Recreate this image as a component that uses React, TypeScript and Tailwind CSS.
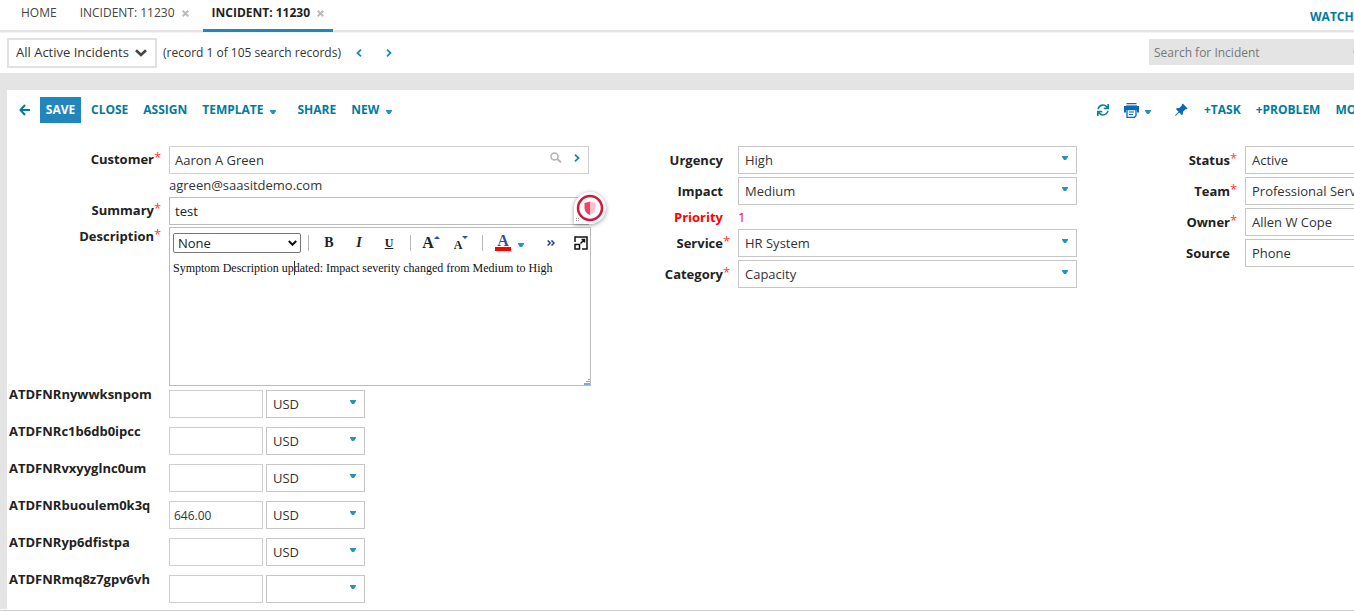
import { useState } from "react";
import type { ReactNode } from "react";
import { FaSync } from "react-icons/fa";
import { BsPinAngleFill } from "react-icons/bs";

const tabs = [
  { label: "HOME", closable: false },
  { label: "INCIDENT: 11230", closable: true },
  { label: "INCIDENT: 11230", closable: true },
];

const amounts = [
  { name: "ATDFNRnywwksnpom", value: "", currency: "USD" },
  { name: "ATDFNRc1b6db0ipcc", value: "", currency: "USD" },
  { name: "ATDFNRvxyyglnc0um", value: "", currency: "USD" },
  { name: "ATDFNRbuoulem0k3q", value: "646.00", currency: "USD" },
  { name: "ATDFNRyp6dfistpa", value: "", currency: "USD" },
  { name: "ATDFNRmq8z7gpv6vh", value: "", currency: "" },
];

function Caret({ className = "" }: { className?: string }) {
  return (
    <svg viewBox="0 0 6 4" className={`w-1.5 h-1 shrink-0 fill-[#2a93b5] ${className}`} aria-hidden="true">
      <path d="M0 0h6v1L4 4H2L0 1z" />
    </svg>
  );
}

function Chevron({ left = false }: { left?: boolean }) {
  return (
    <svg viewBox="0 0 6 8" className="w-[6px] h-2 fill-none stroke-[#2189a8]" strokeWidth="1.800" aria-hidden="true">
      <path d={left ? "M5 .7L1.500 4 5 7.300" : "M1 .7L4.500 4 1 7.300"} />
    </svg>
  );
}

function Magnifier() {
  return (
    <svg viewBox="0 0 12 11" className="w-3 h-[11px] fill-none stroke-[#b5b5b5]" aria-hidden="true">
      <circle cx="4.500" cy="4.500" r="3.500" strokeWidth="1.600" />
      <path d="M7.200 7l3.800 3.300" strokeWidth="2" />
    </svg>
  );
}

function Label({ id, text, required, tone = "text-[#222]" }: { id: string; text: string; required?: boolean; tone?: string }) {
  return (
    <label htmlFor={id} className={`flex justify-end font-bold leading-[18px] ${tone}`}>
      {text}
      <span className="w-[15px] shrink-0 font-normal text-[#ff3b30] leading-3.5">{required ? "*" : ""}</span>
    </label>
  );
}

function Select({ id, value, className = "" }: { id: string; value: string; className?: string }) {
  return (
    <div className={`relative ${className}`}>
      <select
        id={id}
        aria-label={id}
        defaultValue={value}
        className="block w-full h-7 appearance-none border border-[#c6c6c6] bg-white pt-0.5 pl-1.5 pr-6 text-[#333] outline-none"
      >
        <option>{value}</option>
      </select>
      <Caret className="absolute right-[9px] top-2.5 pointer-events-none" />
    </div>
  );
}

function SelectRow({ id, value, required }: { id: string; value: string; required?: boolean }) {
  return (
    <>
      <Label id={id} text={id} required={required} />
      <Select id={id} value={value} />
    </>
  );
}

function Action({ children }: { children: ReactNode }) {
  return (
    <button className="flex items-center gap-[7px] whitespace-nowrap font-bold text-[#007b9e] hover:underline">
      {children}
    </button>
  );
}

function Tool({ label, children }: { label: string; children: ReactNode }) {
  return (
    <button type="button" aria-label={label} className="flex h-6 w-[30px] shrink-0 items-center justify-center font-['Liberation_Serif',serif] font-bold text-[#222]">
      {children}
    </button>
  );
}

function Divider() {
  return <span className="ml-1.5 mr-[5px] h-4 w-px shrink-0 bg-[#b8b8b8]" />;
}

function Tabs() {
  const [active, setActive] = useState(2);
  return (
    <header className="flex h-8 items-stretch border-b-2 border-[#e4e4e4]">
      <nav className="flex pl-3">
        {tabs.map((t, i) => (
          <div
            key={i}
            className={`-mb-0.5 flex items-start gap-[7px] px-[9px] pt-1 border-b-[3px] mr-[5px] ${
              active === i ? "border-[#2186bd]" : "border-transparent"
            }`}
          >
            <button
              onClick={() => setActive(i)}
              className={`text-xs leading-[18px] ${active === i ? "font-bold text-[#222]" : "text-[#444]"}`}
            >
              {t.label}
            </button>
            {t.closable && (
              <button aria-label="Close tab" className="mt-1.5">
                <svg viewBox="0 0 7 7" className="size-[7px] fill-none stroke-[#bbb]" strokeWidth="2">
                  <path d="M.7.7l5.600 5.600M6.300.7L.7 6.300" />
                </svg>
              </button>
            )}
          </div>
        ))}
      </nav>
      <div className="ml-auto w-11 shrink-0 overflow-hidden pt-2">
        <a href="#watch" className="block text-xs leading-[18px] font-bold text-[#007b9e]">WATCH</a>
      </div>
    </header>
  );
}

function RecordBar() {
  return (
    <div className="flex h-[41px] items-center border-t border-[#f3f3f3] pl-[7px] text-[#333]">
      <div className="relative">
        <select
          aria-label="Saved search"
          className="block h-[30px] w-[150px] appearance-none border-2 border-[#e1e1e1] bg-white pl-[7px] outline-none"
        >
          <option>All Active Incidents</option>
        </select>
        <svg viewBox="0 0 12 8" className="absolute right-[10px] top-[11px] w-3 h-2 fill-none stroke-[#444] pointer-events-none" strokeWidth="2.600">
          <path d="M1 1.200l5 4.800 5-4.800" />
        </svg>
      </div>
      <span className="ml-1.5 text-xs">(record 1 of 105 search records)</span>
      <button aria-label="Previous record" className="ml-[15px]"><Chevron left /></button>
      <button aria-label="Next record" className="ml-6"><Chevron /></button>
      <div className="ml-auto mb-0.5 flex h-[26px] w-[205px] shrink-0 items-center overflow-hidden bg-[#e4e4e4]">
        <input
          aria-label="Search for Incident"
          placeholder="Search for Incident"
          className="h-full w-[204px] shrink-0 bg-transparent pl-[5px] text-xs placeholder:text-[#777] outline-none"
        />
        <span className="shrink-0"><Magnifier /></span>
      </div>
    </div>
  );
}

function Toolbar() {
  return (
    <div className="flex h-[38px] items-center pt-0.5 pl-3 text-xs">
      <button aria-label="Back">
        <svg viewBox="0 0 11 12" className="w-[11px] h-3 fill-none stroke-[#007b9e]" strokeWidth="2">
          <path d="M6 1L1.500 6 6 11M1.500 6H11" />
        </svg>
      </button>
      <button className="ml-2.5 h-[26px] w-[41px] bg-[#2186bd] font-bold text-white">SAVE</button>
      <div className="ml-2.5 flex gap-[15px]">
        <Action>CLOSE</Action>
        <Action>ASSIGN</Action>
        <div className="mr-1.5"><Action>TEMPLATE <Caret className="mt-1" /></Action></div>
        <Action>SHARE</Action>
        <Action>NEW <Caret className="mt-1" /></Action>
      </div>
      <div className="ml-auto flex w-[257px] shrink-0 items-center gap-[15px]">
        <button aria-label="Refresh" className="shrink-0 text-[#12809a]"><FaSync className="size-3" /></button>
        <button aria-label="Print" className="flex shrink-0 items-center gap-1.5 mr-2">
          <svg viewBox="0 0 15 15" className="size-[15px]">
            <path fill="#0a68b4" d="M2.500 0h10v1.200h-10zM0 3h15v6.500h-2V7H2v2.500H0z" />
            <path fill="#0a68b4" d="M2 2h11v1.500H2z" opacity=".6" />
            <path fill="#fff" stroke="#0a68b4" strokeWidth="1.300" d="M3 6.500h9v6.300l-1.500 1.500H3z" />
            <path fill="none" stroke="#0a68b4" d="M5 9h5M5 11.500h4" />
          </svg>
          <Caret className="mt-1" />
        </button>
        <button aria-label="Pin" className="mr-px shrink-0 text-[#0a68b4]"><BsPinAngleFill className="size-[14px]" /></button>
        <Action>+TASK</Action>
        <Action>+PROBLEM</Action>
        <Action>MORE</Action>
      </div>
    </div>
  );
}

function Editor() {
  return (
    <div className="relative flex h-[159px] flex-col border border-[#bcbcbc] pt-0.5">
      <div className="flex h-[26px] items-center pl-[3px]">
        <div className="relative">
          <select aria-label="Font" className="block h-5 w-32 appearance-none rounded-xs border border-[#767676] bg-white pl-1 text-[#222] outline-none">
            <option>None</option>
          </select>
          <svg viewBox="0 0 9 6" className="absolute right-1 top-[7px] w-[9px] h-1.5 fill-none stroke-[#111] pointer-events-none" strokeWidth="2">
            <path d="M.8 1l3.700 3.700L8.200 1" />
          </svg>
        </div>
        <span className="ml-[7px] mr-[5px] h-4 w-px shrink-0 bg-[#b8b8b8]" />
        <Tool label="Bold"><span className="text-sm font-bold">B</span></Tool>
        <Tool label="Italic"><span className="text-sm italic">I</span></Tool>
        <Tool label="Underline"><span className="text-xs underline">U</span></Tool>
        <Divider />
        <Tool label="Grow text">
          <span className="text-base">A</span>
          <svg viewBox="0 0 6 3" className="mb-3 w-1.5 h-[3px] fill-[#2f4f9f]"><path d="M3 0l3 3H0z" /></svg>
        </Tool>
        <Tool label="Shrink text">
          <span className="pt-1 text-xs">A</span>
          <svg viewBox="0 0 6 3" className="mb-3 w-1.5 h-[3px] fill-[#2f4f9f]"><path d="M0 0h6L3 3z" /></svg>
        </Tool>
        <Divider />
        <Tool label="Text color">
          <span className="h-[15px] border-b-4 border-[#f00] px-0.5 text-base leading-[10px] text-[#2f4f9f]">A</span>
        </Tool>
        <Caret className="mt-1" />
        <span className="ml-auto flex">
          <Tool label="More tools">
            <svg viewBox="0 0 8 6" className="w-2 h-1.5 fill-none stroke-[#2647a0]" strokeWidth="1.500">
              <path d="M.7.4L3.200 3 .7 5.600M4.500.4L7 3 4.500 5.600" />
            </svg>
          </Tool>
          <button type="button" aria-label="Expand editor" className="ml-2 mr-0.5">
            <svg viewBox="0 0 14 14" className="size-[14px] fill-none stroke-[#111]" strokeWidth="1.500">
              <path d="M1 6V1h12v12H8M1 8.500h4.500V13H1zM6.500 7.500l4-4M7.500 3.500h3v3" />
            </svg>
          </button>
        </span>
      </div>
      <textarea
        id="Description"
        defaultValue="Symptom Description updated: Impact severity changed from Medium to High"
        className="w-full flex-1 resize-none px-[3px] pt-1 font-['Liberation_Serif',serif] text-xs leading-4 text-[#111] outline-none"
      />
      {/* text cursor */}
      <span className="absolute left-[124px] top-[33px] h-3.5 w-px bg-[#333]" />
      <svg viewBox="0 0 6 6" className="absolute right-0 bottom-0 size-1.5 fill-[#74a9ea]">
        <path d="M4 0h2v1H4zM2 2h4v1H2zM0 4h6v2H0z" />
      </svg>
    </div>
  );
}

function ShieldBadge() {
  return (
    <button type="button" aria-label="Password vault" className="absolute -right-[17px] -top-[5px] flex size-8 items-center justify-center rounded-full rounded-bl-none bg-white shadow-[0_1px_4px_rgba(0,0,0,0.4)]">
      <svg viewBox="0 0 32 32" className="size-8">
        <circle cx="16" cy="16" r="12" fill="#fff" stroke="#d5173b" strokeWidth="2.500" />
        <path d="M16 9.500l-5.500 1.500v5c0 3.500 2 5.500 5.500 7z" fill="#ef4460" />
        <path d="M16 9.500l5.500 1.500v5c0 3.500-2 5.500-5.500 7z" fill="#ffc0cb" />
        <path d="M2 26h1v1H2zM4 26h1v1H4zM2 28h1v1H2zM4 28h1v1H4z" fill="#888" />
      </svg>
    </button>
  );
}

export default function App() {
  return (
    <div className="flex min-h-screen flex-col overflow-hidden bg-white font-['Open_Sans',sans-serif] text-[13px]">
      <Tabs />
      <RecordBar />
      <div className="flex flex-1 flex-col border-b border-[#ccc] pb-px">
        <main className="flex-1 border-l-[7px] border-t-[17px] border-[#e4e4e4]">
          <Toolbar />
          <form className="grid grid-cols-[minmax(0,584fr)_minmax(0,486fr)_minmax(0,277fr)] items-start pt-[18px]">
            <div>
              <div className="grid grid-cols-[162px_1fr]">
                <div className="pt-1"><Label id="Customer" text="Customer" required /></div>
                <div className="relative mr-0.5">
                  <input id="Customer" defaultValue="Aaron A Green" className="block h-7 w-full border border-[#cfcfcf] pl-[5px] text-[#333] outline-none" />
                  <span className="absolute right-[9px] top-1.5 flex items-center gap-3">
                    <button type="button" aria-label="Find customer"><Magnifier /></button>
                    <button type="button" aria-label="Open customer"><Chevron /></button>
                  </span>
                </div>
                <span />
                <span className="h-[23px] leading-[22px] text-[#333]">agreen@saasitdemo.com</span>
                <div className="pt-1"><Label id="Summary" text="Summary" required /></div>
                <div className="relative mr-0.5 mb-0.5">
                  <input id="Summary" defaultValue="test" className="block h-7 w-full border border-[#bcbcbc] pl-[5px] text-[#222] outline-none" />
                  <ShieldBadge />
                </div>
                <Label id="Description" text="Description" required />
                <Editor />
              </div>
              {amounts.map((a) => (
                <div key={a.name} className="grid h-[37px] grid-cols-[162px_94px_99px] items-start">
                  <label htmlFor={a.name} className="pl-0.5 font-bold leading-4 text-[#222]">{a.name}</label>
                  <input id={a.name} defaultValue={a.value} className="mt-1 h-7 w-full border border-[#cfcfcf] pl-1 text-xs text-[#333] outline-none" />
                  <Select id={`${a.name} currency`} value={a.currency} className="mt-1 ml-[3px] -mr-[3px]" />
                </div>
              ))}
            </div>

            <div className="grid grid-cols-[147px_1fr] items-center gap-y-[3px]">
              <SelectRow id="Urgency" value="High" />
              <SelectRow id="Impact" value="Medium" />
              <Label id="Priority" text="Priority" tone="text-[#f00]" />
              <output id="Priority" className="leading-[18px] text-[#f0003c]">1</output>
              <SelectRow id="Service" value="HR System" required />
              <SelectRow id="Category" value="Capacity" required />
            </div>

            {/* last column runs past the window edge */}
            <div className="grid grid-cols-[168px_339px] items-center gap-y-[3px]">
              <SelectRow id="Status" value="Active" required />
              <SelectRow id="Team" value="Professional Services" required />
              <SelectRow id="Owner" value="Allen W Cope" required />
              <SelectRow id="Source" value="Phone" />
            </div>
          </form>
        </main>
      </div>
    </div>
  );
}
